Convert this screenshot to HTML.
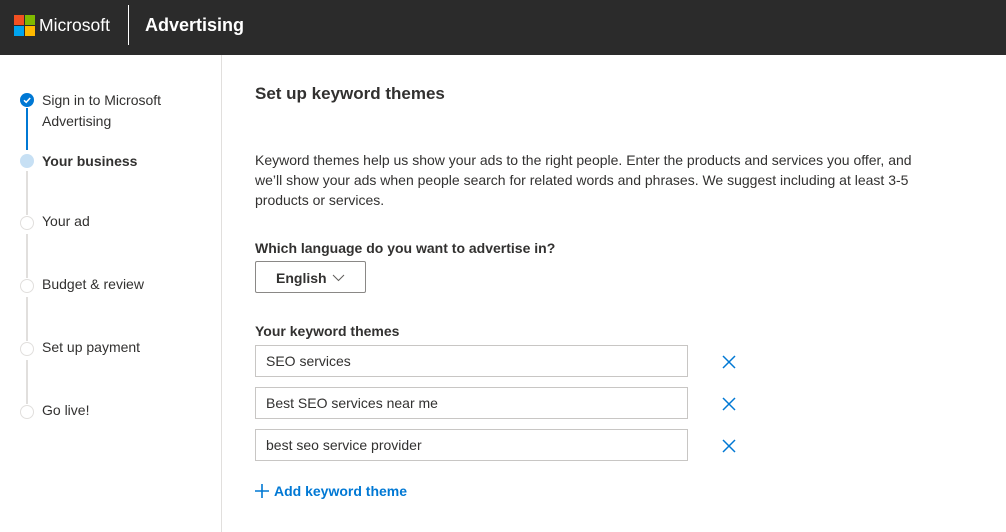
<!DOCTYPE html>
<html><head><style>
*{margin:0;padding:0;box-sizing:border-box}
body{width:1006px;height:532px;overflow:hidden;background:#fff;font-family:"Liberation Sans",sans-serif;color:#323130;position:relative}
.a{position:absolute}
.hdr{left:0;top:0;width:1006px;height:55px;background:#2b2b2b}
.t{font-size:14px;color:#323130;white-space:nowrap}
.circ{width:14px;height:14px;border-radius:50%;border:1px solid #e1dfdd;background:#fff}
.vl{width:2px;background:#e1dfdd;left:26px}
.inp{left:255px;width:433px;height:32px;border:1px solid #c8c6c4;font-size:14px;padding:7px 10px;color:#323130}
.x{left:721px;width:16px;height:16px}
</style></head><body>
<div class="a hdr"></div>
<svg class="a" style="left:14px;top:15px" width="21" height="21"><rect x="0" y="0" width="10" height="10" fill="#f25022"/><rect x="11" y="0" width="10" height="10" fill="#7fba00"/><rect x="0" y="11" width="10" height="10" fill="#00a4ef"/><rect x="11" y="11" width="10" height="10" fill="#ffb900"/></svg>
<div class="a" style="left:39px;top:15px;font-size:17.5px;color:#fff">Microsoft</div>
<div class="a" style="left:128px;top:5px;width:1px;height:40px;background:#fff"></div>
<div class="a" style="left:145px;top:15px;font-size:18px;color:#fff;font-weight:bold">Advertising</div>

<div class="a" style="left:221px;top:55px;width:1px;height:477px;background:#e1dfdd"></div>

<div class="a" style="left:26px;top:108px;width:2px;height:42px;background:#0078d4"></div>
<div class="a vl" style="top:171px;height:44px"></div>
<div class="a vl" style="top:234px;height:44px"></div>
<div class="a vl" style="top:297px;height:44px"></div>
<div class="a vl" style="top:360px;height:44px"></div>
<div class="a" style="left:20px;top:93px;width:14px;height:14px;border-radius:50%;background:#0078d4"></div>
<svg class="a" style="left:20px;top:93px" width="14" height="14"><path d="M4 7.3 L6.2 9.3 L10.2 5" stroke="#fff" stroke-width="1.5" fill="none"/></svg>
<div class="a" style="left:20px;top:154px;width:14px;height:14px;border-radius:50%;background:#c7e0f4"></div>
<div class="a circ" style="left:20px;top:216px"></div>
<div class="a circ" style="left:20px;top:279px"></div>
<div class="a circ" style="left:20px;top:342px"></div>
<div class="a circ" style="left:20px;top:405px"></div>
<div class="a t" style="left:42px;top:90px;line-height:21px">Sign in to Microsoft<br>Advertising</div>
<div class="a t" style="left:42px;top:153px;font-weight:bold">Your business</div>
<div class="a t" style="left:42px;top:213px">Your ad</div>
<div class="a t" style="left:42px;top:276px">Budget &amp; review</div>
<div class="a t" style="left:42px;top:339px">Set up payment</div>
<div class="a t" style="left:42px;top:402px">Go live!</div>

<div class="a" style="left:255px;top:84px;font-size:17px;font-weight:bold;color:#323130">Set up keyword themes</div>
<div class="a" style="left:255px;top:150px;width:670px;font-size:14px;line-height:20px">Keyword themes help us show your ads to the right people. Enter the products and services you offer, and we’ll show your ads when people search for related words and phrases. We suggest including at least 3-5 products or services.</div>
<div class="a t" style="left:255px;top:240px;font-weight:bold">Which language do you want to advertise in?</div>
<div class="a" style="left:255px;top:261px;width:111px;height:32px;border:1px solid #8a8886;border-radius:2px"></div>
<div class="a t" style="left:276px;top:270px;font-weight:bold">English</div>
<svg class="a" style="left:332px;top:274px" width="13" height="8"><path d="M1 1 L6.5 6.5 L12 1" stroke="#605e5c" fill="none"/></svg>
<div class="a t" style="left:255px;top:323px;font-weight:bold">Your keyword themes</div>
<div class="a inp" style="top:345px">SEO services</div>
<div class="a inp" style="top:387px">Best SEO services near me</div>
<div class="a inp" style="top:429px">best seo service provider</div>
<svg class="a x" style="top:354px"><path d="M2 2 L14 14 M14 2 L2 14" stroke="#0078d4" stroke-width="1.5"/></svg>
<svg class="a x" style="top:396px"><path d="M2 2 L14 14 M14 2 L2 14" stroke="#0078d4" stroke-width="1.5"/></svg>
<svg class="a x" style="top:438px"><path d="M2 2 L14 14 M14 2 L2 14" stroke="#0078d4" stroke-width="1.5"/></svg>
<svg class="a" style="left:254px;top:483px" width="16" height="16"><path d="M8 1 V15 M1 8 H15" stroke="#0078d4" stroke-width="1.6"/></svg>
<div class="a t" style="left:274px;top:483px;font-weight:bold;color:#0078d4">Add keyword theme</div>
</body></html>
